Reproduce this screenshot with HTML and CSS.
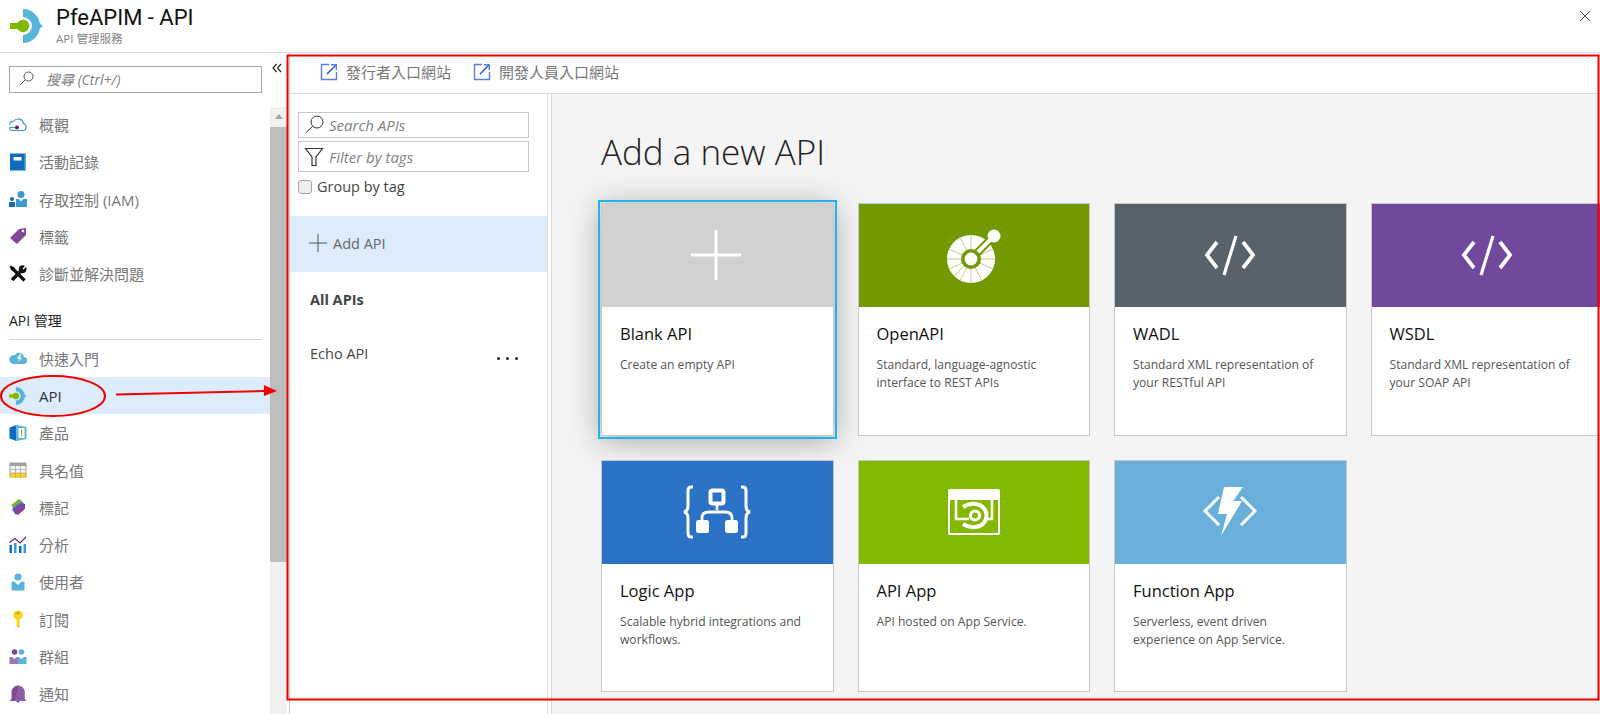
FILE: index.html
```html
<!DOCTYPE html>
<html lang="zh-Hant">
<head>
    <meta charset="UTF-8">
    <meta name="viewport" content="width=device-width, initial-scale=1.0">
    <title>PfeAPIM - API</title>
    <link rel="stylesheet" href="styles.css">
</head>
<body>
    <svg width="0" height="0" class="defs">
        <symbol id="api-logo" viewBox="0 0 34 34">
            <path d="M13 4 A13 13 0 0 1 13 30" fill="none" stroke="#59b4d9" stroke-width="8"/>
            <path d="M29 14 L33 17 L29 20 Z" fill="#59b4d9"/>
            <circle cx="13" cy="17" r="6.2" fill="#7fba00"/>
            <rect x="0" y="14" width="10" height="6" fill="#7fba00"/>
        </symbol>
        <symbol id="code-icon" viewBox="0 0 52 42">
            <path d="M13 7 L3 20 L13 33 M39 7 L49 20 L39 33" fill="none" stroke="#fff" stroke-width="3.8"/>
            <path d="M32 1 L20 40" fill="none" stroke="#fff" stroke-width="3.2"/>
        </symbol>
        <symbol id="open-icon" viewBox="0 0 18 18">
            <path d="M9 1.5 H1.5 V16.500 H16.500 V9" fill="none" stroke="#5b7fe0" stroke-width="1.4"/>
            <path d="M16.5 1.5 L7 11" stroke="#1f55d8" stroke-width="1.4"/>
            <path d="M11 1 H17 V7 L15.6 7 V2.4 H11 Z" fill="#5b7fe0"/>
        </symbol>
    </svg>

    <header class="top-bar">
        <svg class="logo" width="34" height="34"><use href="#api-logo"/></svg>
        <div class="title-block">
            <h1>PfeAPIM - API</h1>
            <p>API 管理服務</p>
        </div>
        <svg class="close" width="12" height="12" viewBox="0 0 12 12"><path d="M1 1 L11 11 M11 1 L1 11" stroke="#444" stroke-width="1"/></svg>
    </header>

    <div class="layout">
        <aside class="sidebar">
            <div class="side-top">
                <div class="side-search">
                    <svg width="15" height="15" viewBox="0 0 15 15"><circle cx="9.5" cy="5.5" r="4.5" fill="none" stroke="#555"/><path d="M6 9 L1 14" stroke="#555"/></svg>
                    <span>搜尋 (Ctrl+/)</span>
                </div>
                <svg class="collapse" width="10" height="10" viewBox="0 0 10 10"><path d="M4.5 1 L1 5 L4.5 9 M9 1 L5.5 5 L9 9" fill="none" stroke="#222" stroke-width="1.2"/></svg>
            </div>
            <div class="side-scroll">
                <nav class="menu">
                    <a class="menu-item">
                        <svg class="icon" viewBox="0 0 18 18"><path d="M3.500 14.500 H14 A3.600 3.600 0 0 0 14.500 7.500 A5.500 5.500 0 0 0 4.500 5.500 A4.500 4.500 0 0 0 3.500 14.500 Z" fill="none" stroke="#3a9bd5" stroke-width="1.200"/><path d="M0.500 11.500 H9" stroke="#3a9bd5"/><circle cx="8" cy="11.500" r="2" fill="#68217a"/></svg>
                        <span>概觀</span>
                    </a>
                    <a class="menu-item">
                        <svg class="icon" viewBox="0 0 18 18"><rect x="1" y="0.5" width="16" height="17" fill="#0f6cbd"/><rect x="15.500" y="0.5" width="1.500" height="17" fill="#59b4d9"/><rect x="4.500" y="4" width="8" height="3.500" fill="#fff"/></svg>
                        <span>活動記錄</span>
                    </a>
                    <a class="menu-item">
                        <svg class="icon" viewBox="0 0 18 18"><circle cx="12" cy="4.500" r="3.500" fill="#3a9bd5"/><path d="M7 17 V9 H9.500 L12 11.500 L14.500 9 H18 V17 Z" fill="#3a9bd5"/><circle cx="3" cy="9" r="2" fill="#0f6cbd"/><rect x="0" y="12" width="6" height="5" fill="#0f6cbd"/></svg>
                        <span>存取控制 (IAM)</span>
                    </a>
                    <a class="menu-item">
                        <svg class="icon" viewBox="0 0 18 18"><path d="M1 11 L10 2 L17 1 L17 8 L8 17 Z" fill="#804998"/><circle cx="14" cy="4" r="1.300" fill="#fff"/></svg>
                        <span>標籤</span>
                    </a>
                    <a class="menu-item">
                        <svg class="icon" viewBox="0 0 18 18"><path d="M3 3 L15.500 15.500" stroke="#111" stroke-width="3.200"/><path d="M0.500 2 L2 0.500 L6 3 L3 6 Z" fill="#111"/><path d="M13 5 L3 15" stroke="#111" stroke-width="3.600"/><path d="M10.500 1.500 Q13.500 -0.500 16 1 L13.500 3.500 L14.500 4.500 L17 2 Q18.500 5 16 7.500 Q14 8.500 12 8 L10 6 Q9.500 3.500 10.500 1.500 Z" fill="#111"/></svg>
                        <span>診斷並解決問題</span>
                    </a>
                    <h2 class="menu-title">API 管理</h2>
                    <a class="menu-item">
                        <svg class="icon" viewBox="0 0 18 18"><path d="M4 15 H14 A3.500 3.500 0 0 0 15 8 A5 5 0 0 0 6 6 A4.500 4.500 0 0 0 4 15 Z" fill="#59b4d9"/><path d="M11 5 L8 10 H10.500 L9 13.500 L13 8.500 H10.500 L12.500 5 Z" fill="#fff"/></svg>
                        <span>快速入門</span>
                    </a>
                    <a class="menu-item active">
                        <svg class="icon" viewBox="0 0 18 18"><use href="#api-logo"/></svg>
                        <span>API</span>
                    </a>
                    <a class="menu-item">
                        <svg class="icon" viewBox="0 0 18 18"><path d="M0.500 3.500 L7.500 1 V17 L0.500 14.500 Z" fill="#0f6cbd"/><path d="M7.500 1 L17.500 3 V15 L7.500 17 Z" fill="#59b4d9"/><rect x="9.500" y="4" width="6" height="10" fill="#fff"/><rect x="12" y="5.500" width="1.200" height="5" fill="#7fba00"/><rect x="12" y="11" width="1.200" height="1.300" fill="#7fba00"/></svg>
                        <span>產品</span>
                    </a>
                    <a class="menu-item">
                        <svg class="icon" viewBox="0 0 18 18"><rect x="0.500" y="1.500" width="17" height="15" fill="#a0a1a2"/><path d="M1.500 5 H16.500 V12 H1.500 Z" fill="#f6f6f6"/><path d="M1.500 12 H16.500 V16.500 H1.500 Z" fill="#fcd116"/><path d="M6.500 5 V16.500 M11.500 5 V16.500 M1.500 8.500 H16.500 M1.500 12 H16.500" stroke="#a0a1a2" stroke-width="0.700"/></svg>
                        <span>具名值</span>
                    </a>
                    <a class="menu-item">
                        <svg class="icon" viewBox="0 0 18 18"><path d="M2 7 L10 1 L13 3 L5 10 Z" fill="#7fba00"/><path d="M3 9 L12 3 L15 5 L6 12 Z" fill="#3a9bd5"/><path d="M3 11 L12 5 L16 6 L16 11 L9 17 L6 16 Z" fill="#804998"/></svg>
                        <span>標記</span>
                    </a>
                    <a class="menu-item">
                        <svg class="icon" viewBox="0 0 18 18"><rect x="0.500" y="9" width="2.500" height="8" fill="#0f6cbd"/><rect x="5" y="7" width="2.500" height="10" fill="#3a9bd5"/><rect x="10" y="10" width="2.500" height="7" fill="#0f6cbd"/><rect x="14.500" y="8" width="2.500" height="9" fill="#3a9bd5"/><path d="M0.500 6.500 L6 2.500 L11 7 L17 1" fill="none" stroke="#68217a" stroke-width="1.200"/></svg>
                        <span>分析</span>
                    </a>
                    <a class="menu-item">
                        <svg class="icon" viewBox="0 0 18 18"><circle cx="9" cy="4" r="3.600" fill="#59b4d9"/><path d="M2.500 17.500 V8.500 H5.500 L9 12 L12.500 8.500 H15.500 V17.500 Z" fill="#59b4d9"/></svg>
                        <span>使用者</span>
                    </a>
                    <a class="menu-item">
                        <svg class="icon" viewBox="0 0 18 18"><circle cx="9" cy="5" r="4.600" fill="#fcd116"/><rect x="7.600" y="8" width="3" height="8" fill="#fcd116"/><path d="M7.600 16 L9 18 L10.600 16 Z" fill="#eab300"/><rect x="7.500" y="2.500" width="3" height="1.500" fill="#b8890a"/></svg>
                        <span>訂閱</span>
                    </a>
                    <a class="menu-item">
                        <svg class="icon" viewBox="0 0 18 18"><circle cx="5.500" cy="5" r="2.800" fill="#804998"/><path d="M0.500 17 V10 H3 L5.500 12 L8 10 H9 V17 Z" fill="#9d7bae"/><circle cx="12.500" cy="5" r="2.800" fill="#59b4d9"/><path d="M9 17 V10 H10 L12.500 12 L15 10 H17.500 V17 Z" fill="#59b4d9"/></svg>
                        <span>群組</span>
                    </a>
                    <a class="menu-item">
                        <svg class="icon" viewBox="0 0 18 18"><path d="M2.500 14 V7 A6.500 6.500 0 0 1 15.500 7 V14 L17.500 16 H0.500 Z" fill="#804998"/><path d="M9 0.500 A6.500 6.500 0 0 1 15.500 7 V14 L17.500 16 H6 Z" fill="#8f5fa6"/><path d="M7 16 H11 L9 18 Z" fill="#804998"/></svg>
                        <span>通知</span>
                    </a>
                </nav>
                <div class="scrollbar">
                    <div class="scroll-up"></div>
                    <div class="scroll-thumb"></div>
                </div>
            </div>
        </aside>

        <main class="main">
            <div class="command-bar">
                <a class="command"><svg width="18" height="18"><use href="#open-icon"/></svg><span>發行者入口網站</span></a>
                <a class="command"><svg width="18" height="18"><use href="#open-icon"/></svg><span>開發人員入口網站</span></a>
            </div>
            <div class="content">
                <section class="api-panel">
                    <div class="filters">
                        <div class="field search-field">
                            <svg width="20" height="20" viewBox="0 0 20 20"><circle cx="13" cy="7" r="6" fill="none" stroke="#333"/><path d="M8.500 11.500 L1.500 18" stroke="#333"/></svg>
                            <span>Search APIs</span>
                        </div>
                        <div class="field filter-field">
                            <svg width="20" height="20" viewBox="0 0 20 20"><path d="M1.500 1.500 H18.500 L12 10 V18.500 H8 V10 Z" fill="none" stroke="#333" stroke-width="1.200"/></svg>
                            <span>Filter by tags</span>
                        </div>
                        <label class="group-check"><span class="box"></span>Group by tag</label>
                    </div>
                    <div class="add-api">
                        <svg width="18" height="18" viewBox="0 0 18 18"><path d="M9 0 V18 M0 9 H18" stroke="#555"/></svg>
                        <span>Add API</span>
                    </div>
                    <div class="all-apis">All APIs</div>
                    <div class="api-row">
                        <span>Echo API</span>
                        <span class="dots"><i></i><i></i><i></i></span>
                    </div>
                </section>

                <section class="blade">
                    <h2 class="blade-title">Add a new API</h2>
                    <div class="card-grid">
                        <article class="card selected">
                            <div class="card-head grey">
                                <svg width="50" height="50" viewBox="0 0 50 50"><path d="M25 0 V50 M0 25 H50" stroke="#fff" stroke-width="3"/></svg>
                            </div>
                            <div class="card-body">
                                <h3>Blank API</h3>
                                <p>Create an empty API</p>
                            </div>
                        </article>
                        <article class="card">
                            <div class="card-head olive">
                                <svg width="56" height="56" viewBox="0 0 56 56">
                                    <circle cx="25" cy="31" r="24" fill="#fff"/>
                                    <path d="M25 7 V55 M1 31 H49 M8 48 L25 31 M14 9 L36 53 M14 53 L25 31 M3 41 L47 21 M3 21 L25 31 M25 31 L47 41" stroke="#b7cf8a" stroke-width="1"/>
                                    <path d="M25 31 L48 8" stroke="#739900" stroke-width="8"/>
                                    <path d="M25 31 L48 8" stroke="#fff" stroke-width="4"/>
                                    <circle cx="25" cy="31" r="10" fill="#739900"/>
                                    <circle cx="25" cy="31" r="6.400" fill="#fff"/>
                                    <circle cx="48" cy="8" r="6.500" fill="#fff"/>
                                </svg>
                            </div>
                            <div class="card-body">
                                <h3>OpenAPI</h3>
                                <p>Standard, language-agnostic interface to REST APIs</p>
                            </div>
                        </article>
                        <article class="card">
                            <div class="card-head slate">
                                <svg width="52" height="42"><use href="#code-icon"/></svg>
                            </div>
                            <div class="card-body">
                                <h3>WADL</h3>
                                <p>Standard XML representation of your RESTful API</p>
                            </div>
                        </article>
                        <article class="card">
                            <div class="card-head purple">
                                <svg width="52" height="42"><use href="#code-icon"/></svg>
                            </div>
                            <div class="card-body">
                                <h3>WSDL</h3>
                                <p>Standard XML representation of your SOAP API</p>
                            </div>
                        </article>
                        <article class="card">
                            <div class="card-head blue">
                                <svg width="70" height="54" viewBox="0 0 70 54">
                                    <path d="M11 2 H9 Q6 2 6 6 V21 Q6 26 2 27 Q6 28 6 33 V48 Q6 52 9 52 H11 M59 2 H61 Q64 2 64 6 V21 Q64 26 68 27 Q64 28 64 33 V48 Q64 52 61 52 H59" fill="none" stroke="#fff" stroke-width="3"/>
                                    <rect x="28.500" y="5.500" width="13" height="13" rx="2" fill="none" stroke="#fff" stroke-width="4"/>
                                    <path d="M35 19 V25 M20 36 V33 Q20 27 27 27 H43 Q50 27 50 33 V36" fill="none" stroke="#fff" stroke-width="2.800"/>
                                    <rect x="14" y="35" width="13" height="13" rx="2.500" fill="#fff"/>
                                    <rect x="43" y="35" width="13" height="13" rx="2.500" fill="#fff"/>
                                </svg>
                            </div>
                            <div class="card-body">
                                <h3>Logic App</h3>
                                <p>Scalable hybrid integrations and workflows.</p>
                            </div>
                        </article>
                        <article class="card">
                            <div class="card-head green">
                                <svg width="54" height="46" viewBox="0 0 54 46">
                                    <path d="M1 2 Q1 0 3 0 H51 Q53 0 53 2 V44 Q53 46 51 46 H3 Q1 46 1 44 Z M3 11 V44 H51 V11 Z" fill="#fff" fill-rule="evenodd"/>
                                    <path d="M9 11 V30 H22 M45 11 V30 H38" fill="none" stroke="#fff" stroke-width="2.600"/>
                                    <path d="M16 18 Q22 14 28 15 A11.500 11.500 0 0 1 28 38 Q22 39 16 35" fill="none" stroke="#fff" stroke-width="4"/>
                                    <circle cx="28" cy="26.500" r="4.500" fill="none" stroke="#fff" stroke-width="3"/>
                                </svg>
                            </div>
                            <div class="card-body">
                                <h3>API App</h3>
                                <p>API hosted on App Service.</p>
                            </div>
                        </article>
                        <article class="card">
                            <div class="card-head sky">
                                <svg width="54" height="50" viewBox="0 0 54 50">
                                    <path d="M16 10 L2 24 L16 38 M38 10 L52 24 L38 38" fill="none" stroke="#fff" stroke-width="3"/>
                                    <path d="M21 0 H40 L30 14 H39 L18 49 L24 27 H15 Z" fill="#fff"/>
                                </svg>
                            </div>
                            <div class="card-body">
                                <h3>Function App</h3>
                                <p>Serverless, event driven experience on App Service.</p>
                            </div>
                        </article>
                    </div>
                </section>
            </div>
        </main>
    </div>

    <!-- hand drawn markup over the screenshot -->
    <svg class="annotations" width="1600" height="714" viewBox="0 0 1600 714">
        <rect x="287.500" y="55.500" width="1311" height="644" fill="none" stroke="#f00000" stroke-width="2"/>
        <ellipse cx="53" cy="396" rx="52" ry="20" fill="none" stroke="#f00000" stroke-width="2"/>
        <path d="M116 394.500 L266 391" stroke="#f00000" stroke-width="2"/>
        <path d="M264 385 L277 391 L264 396 Z" fill="#f00000"/>
    </svg>
</body>
</html>
```

FILE: styles.css
```css
:root {
    --text: #444;
    --muted: #808080;
    --border: #c8c8c8;
    --highlight: #dcecfb;
    --blade: #f4f4f4;
}

* {
    box-sizing: border-box;
}

html, body {
    height: 100%;
}

body {
    margin: 0;
    overflow: hidden;
    position: relative;
    display: flex;
    flex-direction: column;
    background: #fff;
    color: var(--text);
    font-family: "Open Sans", "Noto Sans CJK TC", sans-serif;
    font-size: 14px;
}

.defs {
    position: absolute;
}

.top-bar {
    flex: 0 0 53px;
    display: flex;
    align-items: flex-start;
    padding: 9px 9px 0 10px;
    border-bottom: 1px solid #ddd;
}

.logo {
    flex: none;
}

.title-block {
    margin-left: 12px;
}

.title-block h1 {
    margin: -7px 0 0;
    font-family: Roboto, "Open Sans", sans-serif;
    font-size: 22px;
    line-height: 32px;
    font-weight: 400;
    color: #111;
}

.title-block p {
    margin: -2px 0 0;
    font-size: 11.500px;
    line-height: 14px;
    color: #858585;
}

.close {
    margin-left: auto;
    margin-top: 1px;
}

.layout {
    flex: 1;
    display: flex;
    min-height: 0;
}

/* left menu */
.sidebar {
    flex: 0 0 290px;
    display: flex;
    flex-direction: column;
    border-right: 1px solid var(--border);
    min-height: 0;
}

.side-top {
    flex: 0 0 54px;
    display: flex;
    align-items: flex-start;
    padding: 13px 0 0 9px;
}

.side-search {
    width: 253px;
    height: 27px;
    display: flex;
    align-items: center;
    gap: 12px;
    padding: 0 0 2px 9px;
    border: 1px solid #a6a6a6;
    color: var(--muted);
    font-size: 14px;
    font-style: italic;
}

.collapse {
    margin: -3px 0 0 10px;
}

.side-scroll {
    flex: 1;
    display: flex;
    min-height: 0;
    overflow: hidden;
}

.menu {
    flex: 0 0 270px;
    margin-top: -1px;
}

.menu-item {
    height: 37.25px;
    display: flex;
    align-items: center;
    gap: 12px;
    padding-left: 9px;
    color: #777;
    font-size: 15px;
}

.menu-item.active {
    background: var(--highlight);
    color: #333;
}

.icon {
    flex: none;
    width: 18px;
    height: 18px;
}

.menu-title {
    height: 47.5px;
    margin: 0 8px 0 9px;
    padding-top: 19px;
    border-bottom: 1px solid #d6d6d6;
    font-size: 14px;
    line-height: 20px;
    font-weight: 400;
    color: #222;
}

.scrollbar {
    flex: 0 0 17px;
    background: #f0f0f0;
}

.scroll-up {
    height: 20px;
    padding-top: 7px;
}

.scroll-up::before {
    content: "";
    display: block;
    width: 0;
    margin: 0 auto;
    border: 4px solid transparent;
    border-top: 0;
    border-bottom: 5px solid #a6a6a6;
}

.scroll-thumb {
    height: 435px;
    background: #bdbdbd;
}

/* right part */
.main {
    flex: 1;
    min-width: 0;
    display: flex;
    flex-direction: column;
}

.command-bar {
    flex: 0 0 41px;
    display: flex;
    align-items: center;
    gap: 22px;
    padding: 0 0 3px 30px;
    border-bottom: 1px solid #ddd;
}

.command {
    display: flex;
    align-items: center;
    gap: 8px;
    color: #777;
    font-size: 15px;
}

.content {
    flex: 1;
    display: flex;
    min-height: 0;
}

.api-panel {
    flex: 0 0 258px;
    border-right: 1px solid #d8d8d8;
}

.filters {
    padding: 18px 18px 0 8px;
}

.field {
    display: flex;
    align-items: center;
    gap: 5px;
    padding-left: 5px;
    border: 1px solid var(--border);
    color: var(--muted);
    font-size: 15px;
    font-style: italic;
}

.search-field {
    height: 26px;
    margin-bottom: 3px;
}

.filter-field {
    height: 31px;
}

.group-check {
    display: flex;
    align-items: center;
    gap: 5px;
    margin-top: 8px;
    font-size: 14.500px;
    line-height: 14px;
}

.box {
    width: 14px;
    height: 14px;
    border: 1px solid #a6a6a6;
    border-radius: 3px;
    background: #ededed;
}

.add-api {
    height: 56px;
    margin-top: 22px;
    display: flex;
    align-items: center;
    gap: 6px;
    padding: 0 0 2px 19px;
    background: var(--highlight);
    color: #666;
    font-size: 14.500px;
}

.all-apis {
    margin-top: 19px;
    padding-left: 20px;
    font-size: 14.500px;
    font-weight: 700;
    line-height: 18px;
}

.api-row {
    margin-top: 36px;
    display: flex;
    justify-content: space-between;
    padding: 0 29px 0 20px;
    font-size: 14.500px;
    line-height: 18px;
}

.dots {
    display: flex;
    gap: 6px;
    padding-top: 12px;
}

.dots i {
    width: 3px;
    height: 3px;
    border-radius: 50%;
    background: #222;
}

.blade {
    flex: 1;
    min-width: 0;
    margin-left: 3px;
    padding: 0 0 0 49px;
    border-left: 1px solid #d8d8d8;
    background: var(--blade);
}

.blade-title {
    margin: 36px 0 29px;
    font-size: 35px;
    line-height: 44px;
    font-weight: 300;
    color: #222;
}

.card-grid {
    display: grid;
    grid-template-columns: repeat(4, 232.500px);
    grid-auto-rows: 232.500px;
    gap: 24px;
}

.card {
    display: flex;
    flex-direction: column;
    background: #fff;
    border: 1px solid var(--border);
}

.card.selected {
    outline: 2px solid #1fb4f0;
    outline-offset: 1px;
    box-shadow: 0 4px 30px rgba(0, 0, 0, 0.34);
}

.card-head {
    flex: 0 0 103px;
    display: flex;
    align-items: center;
    justify-content: center;
}

.card-head.grey svg {
    margin: -2px 2px 0 0;
}

.grey { background: #d1d1d1; }
.olive { background: #739900; }
.slate { background: #57626a; }
.purple { background: #70499d; }
.blue { background: #2b71c6; }
.green { background: #83b800; }
.sky { background: #68b0da; }

.card-body {
    padding: 15px 18px 0;
}

.card-body h3 {
    margin: 0 0 10px;
    font-size: 16.500px;
    line-height: 24px;
    font-weight: 400;
    color: #111;
}

.card-body p {
    margin: 0;
    font-size: 12.100px;
    line-height: 18px;
    color: #555;
}

.annotations {
    position: absolute;
    top: 0;
    left: 0;
    pointer-events: none;
}
```
